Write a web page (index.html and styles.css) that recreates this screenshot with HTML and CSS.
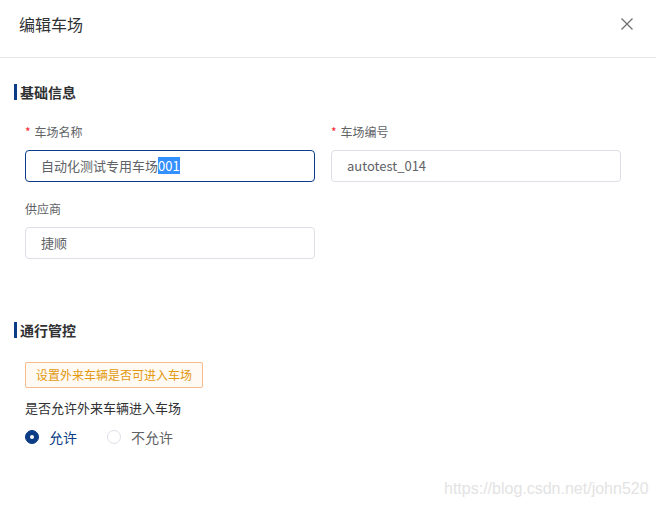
FILE: index.html
```html
<!DOCTYPE html>
<html lang="zh-CN">
<head>
<meta charset="utf-8">
<title>编辑车场</title>
<link rel="stylesheet" href="styles.css">
</head>
<body>
<div class="dialog">
  <div class="header">
    <div class="title">编辑车场</div>
    <svg class="close" width="12" height="12" viewBox="0 0 12 12"><path d="M0.5 0.5L11.5 11.5M11.5 0.5L0.5 11.5" stroke="#707070" stroke-width="1.3" fill="none"/></svg>
  </div>
  <div class="body">
    <div class="section-title">基础信息</div>
    <div class="form-grid">
      <div class="item">
        <div class="label"><span class="req">*</span>车场名称</div>
        <div class="input focused">自动化测试专用车场<span class="sel">001</span></div>
      </div>
      <div class="item">
        <div class="label"><span class="req">*</span>车场编号</div>
        <div class="input">autotest_014</div>
      </div>
      <div class="item">
        <div class="label">供应商</div>
        <div class="input">捷顺</div>
      </div>
    </div>

    <div class="section-title second">通行管控</div>
    <div class="content">
      <div class="tag">设置外来车辆是否可进入车场</div>
      <div class="question">是否允许外来车辆进入车场</div>
      <div class="radios">
        <label class="radio checked"><span class="dot"></span><span class="rlabel">允许</span></label>
        <label class="radio"><span class="dot"></span><span class="rlabel">不允许</span></label>
      </div>
    </div>
  </div>
  <div class="watermark">https://blog.csdn.net/john520</div>
</div>
</body>
</html>
```
FILE: styles.css
```css
* { box-sizing: border-box; }
html, body {
  margin: 0;
  padding: 0;
  background: #fff;
}
body {
  font-family: "Noto Sans CJK SC", "Noto Sans", sans-serif;
  color: #303133;
}
.dialog {
  position: relative;
  width: 656px;
  height: 508px;
  background: #fff;
  overflow: hidden;
}
.header {
  height: 58px;
  border-bottom: 1px solid #e8e8e8;
  display: flex;
  justify-content: space-between;
  align-items: flex-start;
  padding: 14px 23px 0 19px;
}
.title {
  font-size: 16px;
  line-height: 20px;
  color: #303133;
}
.close {
  margin-top: 4px;
  display: block;
}
.body {
  padding: 26px 0 0 14px;
}
.section-title {
  border-left: 3px solid #0c3c85;
  padding-left: 3px;
  font-size: 14px;
  font-weight: bold;
  line-height: 16px;
  color: #303133;
}
.section-title.second {
  margin-top: 63px;
}
.form-grid {
  display: grid;
  grid-template-columns: 290px 290px;
  column-gap: 16px;
  row-gap: 17px;
  margin: 22px 0 0 11px;
}
.label {
  font-size: 12px;
  line-height: 20px;
  color: #606266;
  margin-bottom: 8px;
}
.req {
  color: #f5222d;
  margin-right: 4px;
  font-size: 12px;
}
.input {
  height: 32px;
  border: 1px solid #dcdfe6;
  border-radius: 4px;
  padding: 0 15px;
  font-size: 13px;
  line-height: 30px;
  color: #606266;
  white-space: nowrap;
  overflow: hidden;
}
.input.focused {
  border-color: #0c3c85;
}
.sel {
  display: inline-block;
  background: #3390ff;
  color: #fff;
  line-height: 17px;
  vertical-align: middle;
  margin-top: -3px;
}
.content {
  margin: 23px 0 0 11px;
}
.tag {
  display: inline-block;
  height: 26px;
  line-height: 24px;
  padding: 0 10px;
  border: 1px solid #f7bb8c;
  border-radius: 2px;
  background: #fffaf3;
  color: #e3980f;
  font-size: 12px;
}
.question {
  margin-top: 10px;
  font-size: 13px;
  line-height: 20px;
  color: #303133;
}
.radios {
  margin-top: 9px;
  display: flex;
  align-items: center;
  gap: 30px;
}
.radio {
  display: flex;
  align-items: center;
  gap: 10px;
  font-size: 14px;
  line-height: 20px;
  color: #606266;
}
.dot {
  width: 14px;
  height: 14px;
  border-radius: 50%;
  border: 1px solid #dcdfe6;
  background: #fff;
  position: relative;
}
.radio.checked .dot {
  background: #0c3c85;
  border-color: #0c3c85;
}
.radio.checked .dot::after {
  content: "";
  position: absolute;
  left: 4px;
  top: 4px;
  width: 4px;
  height: 4px;
  border-radius: 50%;
  background: #fff;
}
.radio.checked .rlabel {
  color: #0c3c85;
}
.watermark {
  position: absolute;
  left: 444px;
  top: 479px;
  font-family: "Liberation Sans", Arial, sans-serif;
  font-size: 16px;
  line-height: 20px;
  color: #e3e3e3;
  white-space: nowrap;
}
```
